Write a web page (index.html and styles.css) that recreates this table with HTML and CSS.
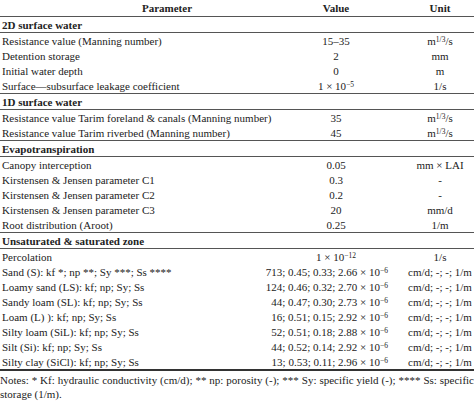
FILE: index.html
```html
<!DOCTYPE html>
<html>
<head>
<meta charset="utf-8">
<link rel="stylesheet" href="styles.css">
</head>
<body>
<div class="page">
<table class="params">
<colgroup><col class="c1"><col class="c2"><col class="c3"></colgroup>
<thead>
<tr class="head line"><th class="p-head">Parameter</th><th class="v">Value</th><th class="u">Unit</th></tr>
</thead>
<tbody>
<tr class="sec line"><td colspan="3">2D surface water</td></tr>
<tr><td>Resistance value (Manning number)</td><td class="v">15–35</td><td class="u">m<sup>1/3</sup>/s</td></tr>
<tr><td>Detention storage</td><td class="v">2</td><td class="u">mm</td></tr>
<tr><td>Initial water depth</td><td class="v">0</td><td class="u">m</td></tr>
<tr class="line"><td>Surface—subsurface leakage coefficient</td><td class="v">1 × 10<sup>−5</sup></td><td class="u">1/s</td></tr>
<tr class="sec line"><td colspan="3">1D surface water</td></tr>
<tr><td>Resistance value Tarim foreland &amp; canals (Manning number)</td><td class="v">35</td><td class="u">m<sup>1/3</sup>/s</td></tr>
<tr class="line"><td>Resistance value Tarim riverbed (Manning number)</td><td class="v">45</td><td class="u">m<sup>1/3</sup>/s</td></tr>
<tr class="sec line"><td colspan="3">Evapotranspiration</td></tr>
<tr><td>Canopy interception</td><td class="v">0.05</td><td class="u">mm × LAI</td></tr>
<tr><td>Kirstensen &amp; Jensen parameter C1</td><td class="v">0.3</td><td class="u">-</td></tr>
<tr><td>Kirstensen &amp; Jensen parameter C2</td><td class="v">0.2</td><td class="u">-</td></tr>
<tr><td>Kirstensen &amp; Jensen parameter C3</td><td class="v">20</td><td class="u">mm/d</td></tr>
<tr class="line"><td>Root distribution (Aroot)</td><td class="v">0.25</td><td class="u">1/m</td></tr>
<tr class="sec line"><td colspan="3">Unsaturated &amp; saturated zone</td></tr>
<tr><td>Percolation</td><td class="v">1 × 10<sup>−12</sup></td><td class="u">1/s</td></tr>
<tr><td>Sand (S): kf *; np **; Sy ***; Ss ****</td><td class="vr">713; 0.45; 0.33; 2.66 × 10<sup>−6</sup></td><td class="u">cm/d; -; -; 1/m</td></tr>
<tr><td>Loamy sand (LS): kf; np; Sy; Ss</td><td class="vr">124; 0.46; 0.32; 2.70 × 10<sup>−6</sup></td><td class="u">cm/d; -; -; 1/m</td></tr>
<tr><td>Sandy loam (SL): kf; np; Sy; Ss</td><td class="vr">44; 0.47; 0.30; 2.73 × 10<sup>−6</sup></td><td class="u">cm/d; -; -; 1/m</td></tr>
<tr><td>Loam (L) ): kf; np; Sy; Ss</td><td class="vr">16; 0.51; 0.15; 2.92 × 10<sup>−6</sup></td><td class="u">cm/d; -; -; 1/m</td></tr>
<tr><td>Silty loam (SiL): kf; np; Sy; Ss</td><td class="vr">52; 0.51; 0.18; 2.88 × 10<sup>−6</sup></td><td class="u">cm/d; -; -; 1/m</td></tr>
<tr><td>Silt (Si): kf; np; Sy; Ss</td><td class="vr">44; 0.52; 0.14; 2.92 × 10<sup>−6</sup></td><td class="u">cm/d; -; -; 1/m</td></tr>
<tr class="last"><td>Silty clay (SiCl): kf; np; Sy; Ss</td><td class="vr">13; 0.53; 0.11; 2.96 × 10<sup>−6</sup></td><td class="u">cm/d; -; -; 1/m</td></tr>
</tbody>
</table>
<p class="notes">Notes: * Kf: hydraulic conductivity (cm/d); ** np: porosity (-); *** Sy: specific yield (-); **** Ss: specific storage (1/m).</p>
</div>
</body>
</html>
```
FILE: styles.css
```css
html, body {
  margin: 0;
  padding: 0;
  background: #fff;
}
.page {
  width: 474px;
  font-family: "Liberation Serif", "Times New Roman", serif;
  font-size: 11px;
  color: #222;
}
.params {
  width: 474px;
  border-collapse: collapse;
  table-layout: fixed;
}
.c1 { width: 236px; }
.c2 { width: 170px; }
.c3 { width: 68px; }
.params th,
.params td {
  height: 15px;
  padding: 0 0 0 2px;
  line-height: 14px;
  white-space: nowrap;
  text-align: left;
  font-weight: normal;
  vertical-align: middle;
}
.params .head th {
  font-weight: bold;
  height: 16px;
}
.params .p-head {
  text-align: center;
  padding-left: 98px;
}
.params .v {
  text-align: center;
  padding-left: 30px;
}
.params .vr {
  text-align: right;
  padding-right: 18px;
}
.params .u {
  text-align: center;
  padding-left: 0;
}
.params .sec td {
  font-weight: bold;
}
.params .line th,
.params .line td {
  border-bottom: 1px solid #555;
}
.params .last td {
  border-bottom: 2px solid #333;
}
sup {
  font-size: 0.68em;
  line-height: 0;
  vertical-align: 0.45em;
}
.notes {
  margin: 2px 0 0 0;
  line-height: 14px;
  text-align: justify;
}
```
